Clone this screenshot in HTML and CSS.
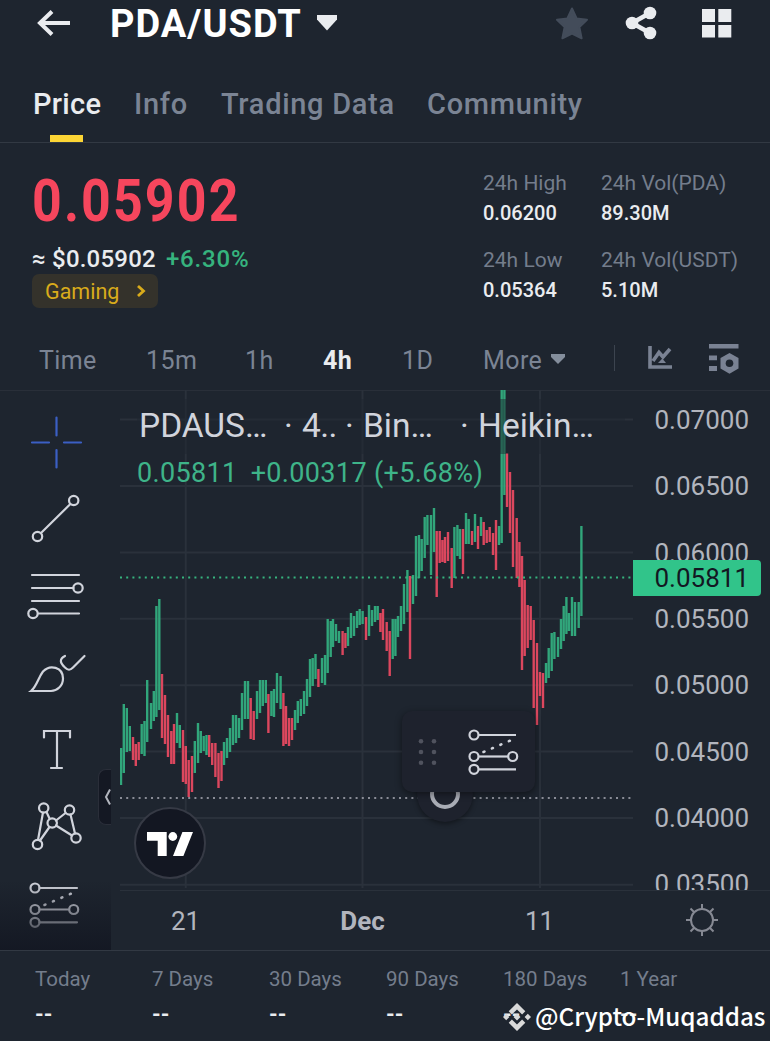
FILE: index.html
```html
<!DOCTYPE html>
<html lang="en">
<head>
  <meta charset="UTF-8" />
  <meta name="viewport" content="width=device-width, initial-scale=1.0"/>
  <title>PDA/USDT</title>
  <link rel="stylesheet" href="styles.css">
</head>
<body>
  <!-- shared icon -->
  <svg class="defs">
    <symbol id="icon-channel" viewBox="0 0 52 48">
      <g fill="none" stroke="currentColor" stroke-width="2.2">
        <circle cx="6" cy="7" r="4.5"/><path d="M10.5 7H48"/>
        <circle cx="6" cy="28.5" r="4.5"/><path d="M10.5 28.5H40"/><circle cx="44.7" cy="28.5" r="4.5"/>
        <circle cx="6" cy="41.3" r="4.5"/><path d="M10.5 41.3H48"/>
        <path d="M15.5 24L46 11" stroke-width="2.6" stroke-linecap="round" stroke-dasharray="1 8.2"/>
      </g>
    </symbol>
  </svg>

  <header class="topbar">
    <svg class="back" width="34" height="26" viewBox="0 0 34 26"><path d="M15 1.5L3 13l12 11.5M3 13h30" fill="none" stroke="#eaecef" stroke-width="4"/></svg>
    <h1>PDA/USDT</h1>
    <svg class="caret" width="20" height="16" viewBox="0 0 20 16"><path d="M0 0h20v4.5L10 15.5 0 4.5z" fill="#eaecef"/></svg>
    <svg class="star" width="32" height="33" viewBox="0 0 32 33"><path d="M16 1.5l4.6 10 10.4 1.2-7.6 7.4 2.2 11.2L16 26.6l-9.6 4.7 2.2-11.2L1 12.700l10.400-1.200z" fill="#434c5a" stroke="#434c5a" stroke-width="2" stroke-linejoin="round"/></svg>
    <svg class="share" width="32" height="34" viewBox="0 0 32 34"><path d="M25 7L7 17l18 10" fill="none" stroke="#eaecef" stroke-width="4.5"/><circle cx="25" cy="7" r="6.3" fill="#eaecef"/><circle cx="7" cy="17" r="6.3" fill="#eaecef"/><circle cx="25" cy="27" r="6.3" fill="#eaecef"/></svg>
    <svg class="tiles" width="30" height="29" viewBox="0 0 30 29"><path d="M0 0h13v13H0zM16.3 0h13v13h-13zM0 16h13v12.5H0zM16.3 16h13v12.5h-13z" fill="#eaecef"/></svg>
  </header>

  <nav class="tabs">
    <a class="active">Price</a>
    <a class="info">Info</a>
    <a class="data">Trading Data</a>
    <a class="community">Community</a>
  </nav>

  <section class="summary">
    <div class="price">
      <div class="last">0.05902</div>
      <div class="fiat"><span>≈ $0.05902</span> <span class="up">+6.30%</span></div>
      <div class="tag">Gaming <svg width="10" height="14" viewBox="0 0 10 14"><path d="M2 2l5.500 5L2 12" fill="none" stroke="#d9ab1b" stroke-width="2.800"/></svg></div>
    </div>
    <dl class="stats">
      <div><dt>24h High</dt><dd>0.06200</dd></div>
      <div><dt>24h Vol(PDA)</dt><dd>89.30M</dd></div>
      <div><dt>24h Low</dt><dd>0.05364</dd></div>
      <div><dt>24h Vol(USDT)</dt><dd>5.10M</dd></div>
    </dl>
  </section>

  <div class="intervals">
    <span class="i-time">Time</span>
    <span class="i-15m">15m</span>
    <span class="i-1h">1h</span>
    <span class="i-4h">4h</span>
    <span class="i-1d">1D</span>
    <span class="i-more">More <svg width="14" height="10" viewBox="0 0 14 10"><path d="M0 0h14v3L7 10 0 3z" fill="#848e9c"/></svg></span>
    <i class="divider"></i>
    <svg class="indicator" width="24" height="24" viewBox="0 0 24 24"><path d="M2 0v21h22M5 15l6-8.500 4 4.500L22 3" fill="none" stroke="#7a8293" stroke-width="3.600"/><path d="M10 17l4.300-4.500L18 17z" fill="#7a8293"/></svg>
    <svg class="config" width="30" height="30" viewBox="0 0 30 30"><path d="M0 0h29.500v4.600H0zM0 11.500h8v4.800H0zM0 22h8v5H0z" fill="#7a8293"/><path d="M20.500 9l9 5v10.500l-9 5.200-9-5.200V14z" fill="#7a8293"/><circle cx="20.500" cy="19.300" r="3.800" fill="#1e252f"/></svg>
  </div>

  <section class="chart">
    <div class="tools">
      <svg class="cross" viewBox="0 0 112 77"><path d="M56.500 13.500v18M56.500 46v17.500M32 38.500h17M64 38.500h17"/></svg>
      <svg viewBox="0 0 112 77"><circle cx="37.500" cy="55.500" r="4.700"/><circle cx="73.700" cy="19.500" r="4.700"/><path d="M41 52l29.400-29"/></svg>
      <svg viewBox="0 0 112 77"><path d="M32 17h47M32 30h41.500M32 43h47M38 55.500h41"/><circle cx="78" cy="30" r="4.700"/><circle cx="33" cy="55.500" r="4.700"/></svg>
      <svg viewBox="0 0 112 77"><path d="M31 56C37 51 38 43 43 36.500C50 29 63 32 63 43.500C63 51 57 56 51 56zM65 21c-6 3-5 7 0 11.500c3 3 5 3 8 0L84.500 21"/></svg>
      <svg viewBox="0 0 112 77"><path d="M44 25.500V19h26v6.500M57 19v37M51 56h11"/></svg>
      <svg viewBox="0 0 112 77"><path d="M43 23.500l-5 27.500M46.500 23l3 6.500M56 31.500l9.500-7.500M70.500 25.500l4.500 19M56 36.500l16 10M49.500 38l-9.500 13.500"/><circle cx="43.700" cy="19" r="4.700"/><circle cx="69.500" cy="21" r="4.700"/><circle cx="52.200" cy="34" r="4.700"/><circle cx="76" cy="49" r="4.700"/><circle cx="37.500" cy="55.500" r="4.700"/></svg>
      <svg class="channel" width="52" height="48"><use href="#icon-channel"/></svg>
      <div class="fade"></div>
      <div class="collapse"><svg width="7" height="18" viewBox="0 0 7 18"><path d="M6 1.500L2 9l4 7.500" fill="none" stroke="#b2b5be" stroke-width="2"/></svg></div>
    </div>

    <div class="plot">
      <svg class="canvas" width="513" height="500" viewBox="120 390 513 500">
        <path class="grid" d="M120 419.500H633M120 486H633M120 552.500H633M120 618.700H633M120 685.200H633M120 751.500H633M120 818H633M120 884.700H633M185.700 390V888M362.500 390V888M540 390V888"/>
        <path class="low-line" d="M120 798H633"/>
        <path class="up-bars" d="M121 748V785M123.800 704V773M126.800 708V752M129.800 726V751M141.700 724V754M144.500 721V756M147.200 680V742M151 703V729M153.800 691V721M156.400 606V717M159.300 599V710M177 713V743M179.800 725V748M194.800 741V773M198 723V763M200.800 731V753M203.700 736V751M206.500 735V755M224 742V765M227 738V758M230 728V752M233 715V745M236 715V743M239 718V738M242 693V730M245 681V719M248 681V719M257 691V719M260 680V713M262.800 680V706M265.800 680V703M271.400 691V716M274 689V717M277 673V703M280.600 676V709M295 710V730M297.800 701V723M300.800 699V716M304 691V714M307 679V706M310 659V697M312.700 658V686M315.500 654V679M322 658V683M325 655V685M327.700 619V673M330.700 621V657M333 619V647M336 624V641M339 631V643M348 627V646M351 613V638M354 616V636M357 611V628M359.700 609V625M362.600 611V624M369 605V636M372 610V626M375 606V622M377.700 606V620M392.700 619V659M395.400 619V656M398 616V637M401 606V631M404 584V624M407.400 570V612M413 575V604M416 536V596M419 535V578M421.700 539V571M424.700 517V558M427.400 515V545M431 515V575M434 508V552M454.400 527V578M457.400 525V556M460 529V559M466 513V544M468.700 519V544M475 514V542M481 517V536M499 526V545M501.700 390V543M504.400 390V495M546 663V683M548.700 648V678M551.700 633V671M554.400 632V659M558 637V657M561 619V649M563.700 606V641M566.400 597V634M569 613V631M572 597V636M575 602V636M578.700 602V628M581.400 526V616"/>
        <path class="down-bars" d="M133 737V760M135.800 744V766M138.700 742V760M162 674V738M165 695V744M168 715V757M171.300 731V764M174 724V764M183 730V782M185.800 746V784M188.700 760V797M192 756V792M209.200 735V757M212.200 743V765M215.400 743V777M218.500 753V788M221.500 751V781M250.700 698V739M253.700 711V740M268.400 694V733M283.400 693V746M286 706V744M289 718V746M292 718V740M318.400 669V687M342.600 631V655M345.400 633V648M366 617V640M380.400 613V632M383 609V640M386.700 622V651M389.700 631V676M410 576V659M436.700 531V597M439.700 531V563M442.400 540V562M445 537V563M448 532V561M451.700 548V588M463 529V574M472 531V545M478 526V549M483.700 522V545M486.700 530V543M489.700 527V542M493 533V555M496 520V570M507 453V507M510 472V533M513 490V567M516.700 518V578M519.400 542V587M522 556V670M524.700 580V656M527.700 605V648M530.700 606V640M533.700 620V708M537 643V725M540 672V696M543 673V708"/>
        <path class="last-line" d="M120 577.500H633"/>
      </svg>

      <div class="legend">
        <div class="legend-title"><span class="l-symbol">PDAUS…</span><span class="l-dot">·</span><span class="l-res">4..</span><span class="l-dot">·</span><span class="l-source">Bin…</span><span class="l-dot">·</span><span>Heikin…</span></div>
        <div class="legend-values"><span>0.05811</span><span>+0.00317 (+5.68%)</span></div>
      </div>

      <div class="handle"><i></i></div>
      <div class="float-tools">
        <svg width="20" height="28" viewBox="0 0 20 28" fill="#50535e"><circle cx="3" cy="3.300" r="2.300"/><circle cx="16" cy="3.300" r="2.300"/><circle cx="3" cy="14" r="2.300"/><circle cx="16" cy="14" r="2.300"/><circle cx="3" cy="24.700" r="2.300"/><circle cx="16" cy="24.700" r="2.300"/></svg>
        <svg width="52" height="48"><use href="#icon-channel"/></svg>
      </div>

      <div class="tv-logo">
        <svg width="46" height="24" viewBox="0 0 46 24" fill="#fff"><path d="M0 0h19.700v24H10.700V8.700H0zM35.400 0H46L36.400 24H26z"/><circle cx="25.800" cy="4.500" r="4.400"/></svg>
      </div>

      <div class="time-axis"><span>21</span><span class="month">Dec</span><span>11</span></div>
    </div>

    <div class="axis">
      <div class="prices">
        <span>0.07000</span>
        <span>0.06500</span>
        <span>0.06000</span>
        <span>0.05500</span>
        <span>0.05000</span>
        <span>0.04500</span>
        <span>0.04000</span>
        <span>0.03500</span>
      </div>
      <div class="current">0.05811</div>
      <div class="settings">
        <svg width="34" height="34" viewBox="0 0 34 34" fill="none" stroke="#868993" stroke-width="2"><circle cx="17" cy="17" r="11"/><path d="M17 1v5M17 28v5M1 17h5M28 17h5M5.500 5.500l4 4M24.500 24.500l4 4M28.500 5.500l-4 4M9.500 24.500l-4 4"/></svg>
      </div>
    </div>
  </section>

  <footer class="periods">
    <div><span>Today</span><b>--</b></div>
    <div><span>7 Days</span><b>--</b></div>
    <div><span>30 Days</span><b>--</b></div>
    <div><span>90 Days</span><b>--</b></div>
    <div><span>180 Days</span><b>--</b></div>
    <div><span>1 Year</span><b>--</b></div>
  </footer>

  <div class="credit">
    <svg width="28" height="28" viewBox="0 0 28 28" fill="#d9d9d9"><path d="M14 0l8.300 8.300-3.200 3.200L14 6.400l-5.100 5.100-3.200-3.200zM14 28l8.300-8.300-3.200-3.200-5.100 5.100-5.100-5.100-3.200 3.200zM0 14l3.200-3.200L6.400 14l-3.200 3.200zM21.600 14l3.200-3.200L28 14l-3.200 3.200zM14 10.500l3.500 3.500-3.500 3.500-3.500-3.500z"/></svg>
    <span>@Crypto-Muqaddas</span>
  </div>
</body>
</html>
```

FILE: styles.css
```css
* { box-sizing: border-box; }
html { background-color: #1e252f; }
body {
  margin: 0; width: 770px; height: 1041px; overflow: hidden;
  position: relative; background-color: #1e252f; color: #eaecef;
  font-family: Roboto, "Liberation Sans", sans-serif;
}
svg { display: block; flex: none; }
.defs { position: absolute; width: 0; height: 0; }

/* top bar */
.topbar { display: flex; align-items: center; height: 46px; padding: 0 38px 0 37px; }
.topbar h1 {
  margin: 1px 0 0 39px; width: 207px; font-size: 38px; line-height: 46px;
  font-weight: 700; letter-spacing: 1px; color: #fff; white-space: nowrap;
}
.topbar .star { margin-left: auto; }
.topbar .share { margin-left: 37px; }
.topbar .tiles { margin-left: 45px; }

/* tabs */
.tabs {
  display: flex; height: 97px; padding-left: 33px;
  border-bottom: 1px solid #323943; font-size: 29px; line-height: 116px;
  font-weight: 500; letter-spacing: 0.7px; color: #7b8494; white-space: nowrap;
}
.tabs a { position: relative; }
.tabs .active { color: #eaecef; width: 101px; letter-spacing: 0.3px; }
.tabs .active::after {
  content: ""; position: absolute; left: 17px; bottom: 0;
  width: 33px; height: 7px; background-color: #fcd535;
}
.tabs .info { width: 87px; }
.tabs .data { width: 206px; }

/* price summary */
.summary { display: flex; height: 182px; }
.price { width: 483px; padding: 24px 0 0 32px; }
.last {
  font-size: 59px; line-height: 68px; font-weight: 700;
  letter-spacing: 2.4px; color: #f6465d;
  transform: scaleX(0.88); transform-origin: left;
}
.fiat { margin-top: 10px; font-size: 24px; line-height: 28px; font-weight: 500; letter-spacing: 0.2px; white-space: nowrap; }
.fiat .up { margin-left: 4px; letter-spacing: 0.8px; color: #36b37e; }
.tag {
  display: flex; align-items: center; justify-content: space-between;
  width: 126px; height: 34px; margin-top: 1px; padding: 0 12px 0 13px;
  border-radius: 7px; background-color: #34322b; color: #d9ab1b; font-size: 21.5px;
}
.stats {
  display: grid; grid-template-columns: 118px 160px; grid-auto-rows: 77px;
  margin: 0; padding-top: 25px; white-space: nowrap;
}
.stats dt { font-size: 21px; line-height: 30px; color: #747d8c; }
.stats dd { margin: 0; font-size: 20px; line-height: 30px; font-weight: 500; }

/* interval bar */
.intervals {
  display: flex; align-items: center; height: 65px; padding: 6px 0 0 39px;
  font-size: 25px; color: #7b8494; white-space: nowrap; letter-spacing: 0.4px;
}
.i-time { width: 107px; }
.i-15m { width: 99px; }
.i-1h { width: 78px; }
.i-4h { width: 79px; color: #eaecef; font-weight: 700; }
.i-1d { width: 81px; }
.i-more { display: flex; align-items: center; gap: 9px; width: 131px; }
.i-more svg { margin-top: -4px; }
.divider { width: 1px; height: 26px; margin-top: -6px; background-color: #3c444f; }
.indicator { margin: -6px 0 0 33px; }
.config { margin: -4px 0 0 37px; }

/* chart */
.chart { display: flex; height: 560px; border-top: 1px solid #292f39; }
.tools { position: relative; width: 112px; padding-top: 12.5px; margin-right: 8px; color: #d1d4dc; }
.tools > svg { width: 112px; height: 77px; fill: none; stroke: #d1d4dc; stroke-width: 2.2; stroke-linecap: round; }
.tools > .cross { stroke: #3b5fc4; }
.tools > .channel { width: 52px; height: 48px; margin: 15px 0 0 29px; stroke: none; }
.fade {
  position: absolute; left: 0; bottom: 0; width: 111px; height: 70px;
  background: linear-gradient(rgba(19, 23, 34, 0), rgba(19, 23, 34, 0.9));
}
.collapse {
  position: absolute; right: 1px; top: 378px; width: 13px; height: 56px;
  padding: 18px 0 0 5px; border: 1px solid #2a2e39; border-right: 0;
  border-radius: 8px 0 0 8px; background-color: #141823;
}
.plot { position: relative; width: 513px; }
.canvas { margin-top: -1px; }
.canvas path { fill: none; }
.grid { stroke: #2a313b; stroke-width: 2; }
.low-line { stroke: #8a8d97; stroke-width: 2; stroke-dasharray: 2 4.2; }
.last-line { stroke: #36b37e; stroke-width: 2; stroke-dasharray: 2 4.2; }
.up-bars { stroke: #31a67b; stroke-width: 2.4; }
.down-bars { stroke: #dc475e; stroke-width: 2.4; }

.legend { position: absolute; left: 17px; top: 8px; white-space: nowrap; }
.legend-title {
  display: flex; width: 488px; height: 55px; padding-left: 2px;
  background-color: rgba(30, 37, 47, 0.5);
  font-size: 33.5px; line-height: 54px; color: #d1d4dc;
}
.l-symbol { width: 145px; }
.l-dot { width: 18px; }
.l-res { width: 43px; letter-spacing: -0.6px; }
.l-source { width: 97px; }
.legend-values { display: flex; gap: 13px; font-size: 27px; line-height: 38px; letter-spacing: 0.35px; color: #3eb489; }

.handle {
  position: absolute; left: 297px; top: 375px; width: 56px; height: 56px;
  padding: 13px; border-radius: 50%; background-color: #1e222d;
  box-shadow: 0 2px 5px rgba(0, 0, 0, 0.4);
}
.handle i { display: block; width: 30px; height: 30px; border: 4px solid #a9acb5; border-radius: 50%; }
.float-tools {
  position: absolute; left: 282px; top: 320px; display: flex; align-items: center;
  width: 133px; height: 81px; padding-left: 16px; gap: 30px;
  border-radius: 10px; background-color: #1e222d; color: #d1d4dc;
  box-shadow: 0 2px 7px rgba(0, 0, 0, 0.45);
}
.tv-logo {
  position: absolute; left: 14px; top: 416px; display: flex;
  align-items: center; justify-content: center; width: 72px; height: 72px;
  padding-top: 2px; border: 2px solid #363a45; border-radius: 50%; background-color: #131722;
}
.time-axis {
  display: flex; width: 531px; height: 59px; margin-left: -23px;
  font-size: 26px; line-height: 62px; color: #b2b5be; text-align: center;
}
.time-axis span { width: 177px; flex: none; }
.month { font-weight: 700; }
.axis { position: relative; width: 137px; }
.prices {
  height: 499px; overflow: hidden;
  font-size: 26px; color: #b2b5be;
}
.prices span { display: block; height: 66.35px; line-height: 58.5px; padding-left: 21.5px; }
.current {
  position: absolute; left: 0; top: 169px; width: 128px; height: 36px;
  padding-left: 21.5px; border-radius: 0 4px 4px 0; background-color: #31c48a;
  color: #131722; font-size: 26px; line-height: 37px;
}
.settings { height: 60px; padding: 13px 0 0 52px; }
.plot .canvas, .prices { box-shadow: 0 1px 0 #2a313b; }

/* periods */
.periods {
  display: flex; height: 91px; padding: 12px 0 0 35px;
  border-top: 1px solid #323943; white-space: nowrap;
}
.periods div { width: 117px; flex: none; }
.periods span { display: block; font-size: 20.5px; line-height: 33px; color: #747d8c; }
.periods b { display: block; font-size: 22px; line-height: 38px; font-weight: 700; }

.credit {
  position: absolute; left: 503px; top: 1000px; display: flex; align-items: center;
  height: 34px; gap: 4px; color: #fff; white-space: nowrap;
  font-family: "Noto Sans CJK SC", "Noto Sans", sans-serif; font-size: 24.2px; font-weight: 500; line-height: 34px;
}
.credit span { margin-top: -3px; }
```
